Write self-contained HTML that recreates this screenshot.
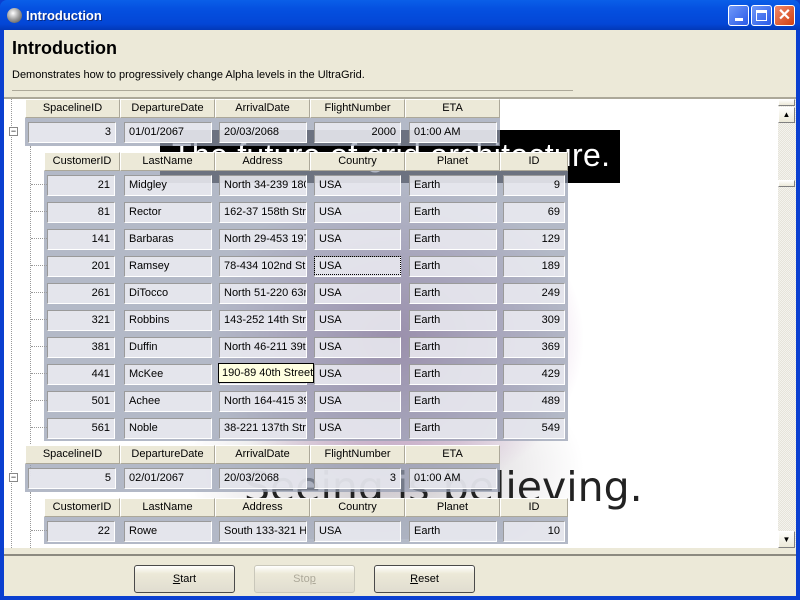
<!DOCTYPE html>
<html><head><meta charset="utf-8"><style>
*{margin:0;padding:0;box-sizing:border-box}
body{width:800px;height:600px;overflow:hidden;position:relative;background:#0a3fd0;font-family:"Liberation Sans",Tahoma,sans-serif;font-size:11px;color:#000}
.a{position:absolute}
.title{left:0;top:0;width:800px;height:30px;background:linear-gradient(#0a5fe8,#0550e0 30%,#0346d6 80%,#0238b8);border-radius:7px 7px 0 0}
.title span{position:absolute;left:26px;top:8px;color:#fff;font-weight:bold;font-size:13px;text-shadow:1px 1px #0a2a80}
.tb{top:5px;width:21px;height:21px;border:1px solid #fff;border-radius:3px;background:linear-gradient(135deg,#6f98f8,#2a5ae8)}
.hdr{left:0;top:0;height:19px;background:#ece9d8;border-right:1px solid #aca899;border-bottom:1px solid #aca899;border-top:1px solid #fff;border-left:1px solid #fff;text-align:center;line-height:17px;font-size:11px}
.cell{height:21px;background:rgba(236,236,242,.85);border:1px solid;border-color:#9a9a9a #fff #fff #9a9a9a;line-height:19px;padding:0 4px;overflow:hidden;white-space:nowrap;font-size:11px}
.r{text-align:right}
.rowbg{background:rgba(150,158,178,.72)}
.btn{top:565px;width:101px;height:28px;background:linear-gradient(#fff,#ece9d8 30%,#e0ddd0);border:1px solid #4a4a4a;border-radius:3px;text-align:center;line-height:26px;font-size:11px}
.sb{background:linear-gradient(#fdfdfb,#ece9d8);border:1px solid;border-color:#fff #808080 #808080 #fff}
</style></head><body>
<div class="a title"><span>Introduction</span>
<div class="a" style="left:7px;top:8px;width:15px;height:15px;border-radius:50%;background:radial-gradient(circle at 40% 35%,#fff,#999 50%,#444)"></div>
<div class="a tb" style="left:728px"><div class="a" style="left:6px;top:12px;width:8px;height:3px;background:#fff"></div></div>
<div class="a tb" style="left:751px"><div class="a" style="left:4px;top:4px;width:11px;height:11px;border:1px solid #fff;border-top-width:3px"></div></div>
<div class="a tb" style="left:774px;background:linear-gradient(135deg,#f0886a,#d04010);color:#fff;font-size:16px;font-weight:bold;text-align:center;line-height:19px">✕</div>
</div>
<div class="a" style="left:4px;top:30px;width:792px;height:566px;background:#ece9d8"></div>
<div class="a" style="left:12px;top:38px;font-size:18px;font-weight:bold">Introduction</div>
<div class="a" style="left:12px;top:69px;font-size:11px">Demonstrates how to progressively change Alpha levels in the UltraGrid.</div>
<div class="a" style="left:12px;top:90px;width:561px;height:1px;background:#aca899"></div>
<div class="a" style="left:4px;top:97px;width:792px;height:2px;background:#aca899"></div>
<div class="a" style="left:4px;top:99px;width:774px;height:449px;background:#fff;overflow:hidden" id="g">
<div class="a" style="left:160px;top:80px;width:500px;height:360px;background:radial-gradient(ellipse 190px 160px at 230px 160px,rgba(150,80,140,.85),rgba(190,140,190,.5) 60%,rgba(255,255,255,0) 100%),radial-gradient(ellipse 200px 120px at 220px 290px,rgba(120,110,120,.4),rgba(255,255,255,0))"></div>
<div class="a" style="left:156px;top:31px;width:460px;height:53px;background:#000;color:#fff;font-size:32px;line-height:50px;padding-left:12px;white-space:nowrap;font-family:'Liberation Sans',sans-serif;letter-spacing:0.3px">The future of grid architecture.</div>
<div class="a" style="left:240px;top:364px;color:#222;font-size:41px;white-space:nowrap;font-family:'DejaVu Sans',sans-serif">Seeing is believing.</div>
</div>
<div class="a" style="left:778px;top:99px;width:18px;height:449px;background:repeating-conic-gradient(#f4f3ee 0 25%,#e6e4da 0 50%) 0 0/2px 2px"></div>
<div class="a sb" style="left:778px;top:99px;width:17px;height:7px"></div>
<div class="a sb" style="left:778px;top:107px;width:17px;height:16px;font-size:8px;text-align:center;line-height:14px">▲</div>
<div class="a sb" style="left:778px;top:180px;width:17px;height:7px"></div>
<div class="a sb" style="left:778px;top:531px;width:17px;height:17px;font-size:8px;text-align:center;line-height:15px">▼</div>
<div class="a" style="left:4px;top:554px;width:792px;height:2px;background:#8c8a80"></div>
<div class="a btn" style="left:134px"><u>S</u>tart</div>
<div class="a btn" style="left:254px;color:#aca899;border-color:#c9c7ba">Sto<u>p</u></div>
<div class="a btn" style="left:374px"><u>R</u>eset</div>
<script>
var g=document.getElementById('g');var oy=99,ox=4;
function add(h){g.insertAdjacentHTML('beforeend',h)}
function hdr(y,cols){cols.forEach(function(c){add('<div class="a hdr" style="left:'+(c[0]-ox)+'px;top:'+(y-oy)+'px;width:'+(c[1]-c[0])+'px">'+c[2]+'</div>')})}
function row(y,x0,x1,h,cells){add('<div class="a rowbg" style="left:'+(x0-ox)+'px;top:'+(y-oy)+'px;width:'+(x1-x0)+'px;height:'+h+'px"></div>');cells.forEach(function(c){add('<div class="a cell'+(c[3]?' r':'')+'" style="left:'+(c[0]-ox)+'px;top:'+(y+4-oy)+'px;width:'+c[1]+'px">'+c[2]+'</div>')})}
var P=[[25,120,'SpacelineID'],[120,215,'DepartureDate'],[215,310,'ArrivalDate'],[310,405,'FlightNumber'],[405,500,'ETA']];
var C=[[44,120,'CustomerID'],[120,215,'LastName'],[215,310,'Address'],[310,405,'Country'],[405,500,'Planet'],[500,568,'ID']];
add('<div class="a" style="left:7px;top:0;width:1px;height:449px;border-left:1px dotted #999"></div>');
add('<div class="a" style="left:26px;top:47px;width:1px;height:330px;border-left:1px dotted #999"></div>');
add('<div class="a" style="left:26px;top:393px;width:1px;height:60px;border-left:1px dotted #999"></div>');
function minus(y){add('<div class="a" style="left:5px;top:'+(y-oy)+'px;width:9px;height:9px;border:1px solid #888;background:#fff;font-size:9px;line-height:6px;text-align:center">−</div>')}
function parent(y,id,d,fn){hdr(y,P);row(y+19,25,500,28,[[28,88,id,1],[124,88,d],[219,88,'20/03/2068'],[314,87,fn,1],[409,88,'01:00 AM']]);minus(y+28)}
var data=[[21,'Midgley','North 34-239 180',9],[81,'Rector','162-37 158th Str',69],[141,'Barbaras','North 29-453 197',129],[201,'Ramsey','78-434 102nd St',189],[261,'DiTocco','North 51-220 63r',249],[321,'Robbins','143-252 14th Str',309],[381,'Duffin','North 46-211 39t',369],[441,'McKee','190-89 40th Street',429],[501,'Achee','North 164-415 39',489],[561,'Noble','38-221 137th Str',549]];
function child(y,d){row(y,44,568,27,[[47,68,d[0],1],[124,88,d[1]],[219,88,d[2]],[314,87,'USA'],[409,88,'Earth'],[503,62,d[3],1]]);add('<div class="a" style="left:27px;top:'+(y+13-oy)+'px;width:16px;border-top:1px dotted #999"></div>')}
parent(99,3,'01/01/2067',2000);hdr(152,C);
data.forEach(function(d,i){child(171+27*i,d)});
parent(445,5,'02/01/2067',3);hdr(498,C);child(517,[22,'Rowe','South 133-321 H',10]);
add('<div class="a" style="left:'+(218-ox)+'px;top:'+(363-oy)+'px;width:96px;height:20px;background:#ffffe1;border:1px solid #000;line-height:18px;padding-left:3px;font-size:11px;white-space:nowrap">190-89 40th Street</div>');
add('<div class="a" style="left:'+(314-ox)+'px;top:'+(256-oy)+'px;width:87px;height:19px;border:1px dotted #000"></div>');
</script>
</body></html>
